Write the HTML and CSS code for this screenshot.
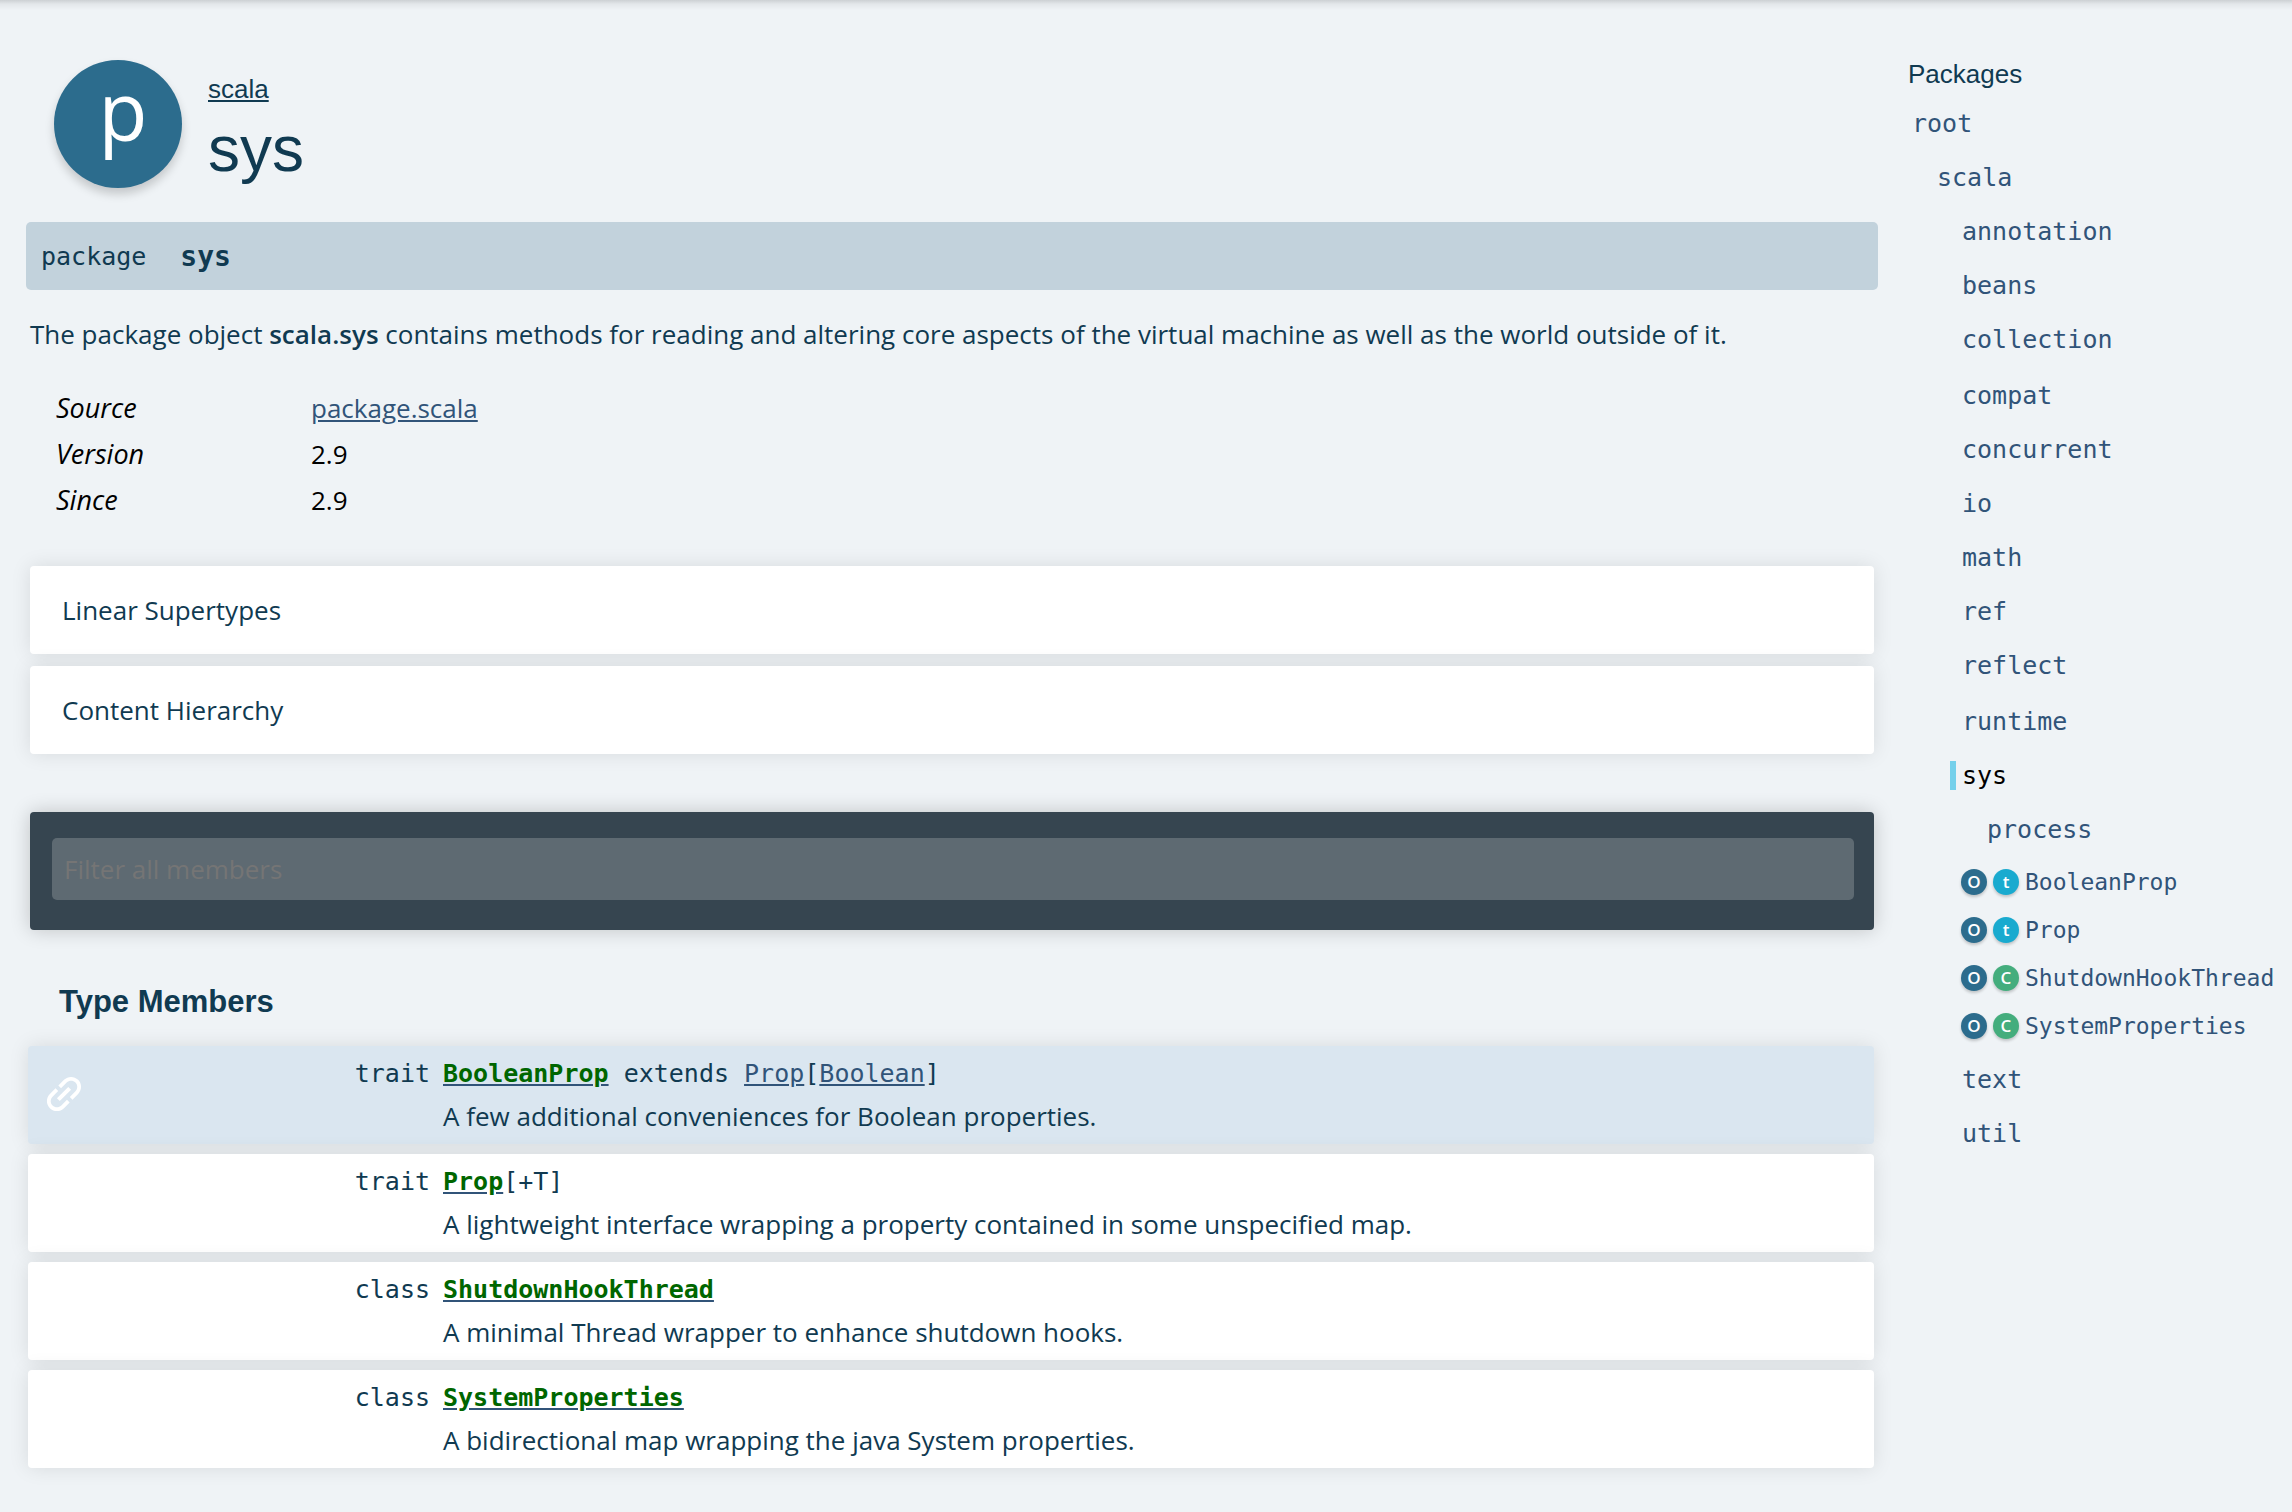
FILE: index.html
```html
<!DOCTYPE html>
<html lang="en">
  <head>
    <meta charset="utf-8">
    <title>scala.sys</title>
    <link rel="stylesheet" href="styles.css">
  </head>
  <body>
    <div id="page">
      <main id="content">
        <header id="definition">
          <div class="big-circle">p</div>
          <div>
            <p id="owner"><a href="#">scala</a></p>
            <h1>sys</h1>
          </div>
        </header>

        <div id="signature">
          <span>package</span>
          <span class="symbol">sys</span>
        </div>

        <div id="comment">
          <p>The package object <b>scala.sys</b> contains methods for reading and altering core aspects of the virtual machine as well as the world outside of it.</p>
          <dl class="attributes">
            <dt>Source</dt>
            <dd><a href="#">package.scala</a></dd>
            <dt>Version</dt>
            <dd>2.9</dd>
            <dt>Since</dt>
            <dd>2.9</dd>
          </dl>
          <button type="button" class="toggle">Linear Supertypes</button>
          <button type="button" class="toggle">Content Hierarchy</button>
        </div>

        <div id="memberfilter">
          <input type="text" id="mbrsel-input" placeholder="Filter all members" aria-label="Filter all members">
        </div>

        <section id="types">
          <h3>Type Members</h3>
          <ol>
            <li class="active">
              <a class="permalink" href="#" aria-label="Permalink">
                <svg viewBox="0 0 24 24" width="48" height="48"><path transform="rotate(-45 12 12)" fill="#fff" d="M3.9 12c0-1.71 1.39-3.1 3.1-3.1h4V7H7c-2.76 0-5 2.24-5 5s2.24 5 5 5h4v-1.9H7c-1.71 0-3.1-1.39-3.1-3.1zM8 13h8v-2H8v2zm9-6h-4v1.9h4c1.71 0 3.1 1.39 3.1 3.1s-1.39 3.1-3.1 3.1h-4V17h4c2.76 0 5-2.24 5-5s-2.24-5-5-5z"/></svg>
              </a>
              <span class="kind">trait</span>
              <div class="member">
                <p class="code"><a class="name" href="#">BooleanProp</a> extends <a href="#">Prop</a>[<a href="#">Boolean</a>]</p>
                <p>A few additional conveniences for Boolean properties.</p>
              </div>
            </li>
            <li>
              <span class="kind">trait</span>
              <div class="member">
                <p class="code"><a class="name" href="#">Prop</a>[+T]</p>
                <p>A lightweight interface wrapping a property contained in some unspecified map.</p>
              </div>
            </li>
            <li>
              <span class="kind">class</span>
              <div class="member">
                <p class="code"><a class="name" href="#">ShutdownHookThread</a></p>
                <p>A minimal Thread wrapper to enhance shutdown hooks.</p>
              </div>
            </li>
            <li>
              <span class="kind">class</span>
              <div class="member">
                <p class="code"><a class="name" href="#">SystemProperties</a></p>
                <p>A bidirectional map wrapping the java System properties.</p>
              </div>
            </li>
          </ol>
        </section>
      </main>

      <nav id="packages">
        <h2>Packages</h2>
        <ul>
          <li><a href="#">root</a>
            <ul>
              <li><a href="#">scala</a>
                <ul>
                  <li><a href="#">annotation</a></li>
                  <li><a href="#">beans</a></li>
                  <li><a href="#">collection</a></li>
                  <li><a href="#">compat</a></li>
                  <li><a href="#">concurrent</a></li>
                  <li><a href="#">io</a></li>
                  <li><a href="#">math</a></li>
                  <li><a href="#">ref</a></li>
                  <li><a href="#">reflect</a></li>
                  <li><a href="#">runtime</a></li>
                  <li><a class="current" href="#">sys</a>
                    <ul>
                      <li><a href="#">process</a></li>
                    </ul>
                    <ul class="entities">
                      <li><span class="dot object">O</span><span class="dot trait">t</span><a href="#">BooleanProp</a></li>
                      <li><span class="dot object">O</span><span class="dot trait">t</span><a href="#">Prop</a></li>
                      <li><span class="dot object">O</span><span class="dot class">C</span><a href="#">ShutdownHookThread</a></li>
                      <li><span class="dot object">O</span><span class="dot class">C</span><a href="#">SystemProperties</a></li>
                    </ul>
                  </li>
                  <li><a href="#">text</a></li>
                  <li><a href="#">util</a></li>
                </ul>
              </li>
            </ul>
          </li>
        </ul>
      </nav>
    </div>
  </body>
</html>
```
FILE: styles.css
```css
* {
  box-sizing: border-box;
  margin: 0;
  padding: 0;
}

body {
  background: #eff3f6 linear-gradient(#cdd1d4, #e3e7ea 4px, #eff3f6 10px) no-repeat;
  color: #103a51;
  font-family: "Open Sans", sans-serif;
  font-size: 26px;
  line-height: 40px;
}

ul, ol {
  list-style: none;
}

a {
  color: #315479;
}

#page {
  display: flex;
  min-height: 100vh;
}

#content {
  flex: 1;
  padding: 60px 30px 44px 26px;
}

#definition {
  display: flex;
  gap: 26px;
  padding-left: 28px;
  height: 162px;
  font-family: "Liberation Sans", Arial, sans-serif;
}

#owner {
  margin-top: 9px;
}

#owner a {
  color: #103a51;
}

#definition h1 {
  font-size: 64px;
  font-weight: normal;
  line-height: 80px;
}

.big-circle {
  width: 128px;
  height: 128px;
  padding-left: 10px;
  border-radius: 50%;
  background: #2c6c8d;
  box-shadow: 0 6px 10px rgba(0, 0, 0, 0.18);
  color: #fff;
  font-family: "Open Sans", sans-serif;
  font-size: 80px;
  line-height: 100px;
  text-align: center;
}

#signature {
  display: flex;
  gap: 34px;
  padding: 2px 15px 0;
  border-radius: 5px;
  background: #c2d2dc;
  font-family: "DejaVu Sans Mono", monospace;
  font-size: 25px;
  line-height: 66px;
}

#signature .symbol {
  font-size: 28px;
  font-weight: bold;
}

#comment {
  padding: 24px 4px 0;
}

#comment b {
  font-weight: 600;
}

.attributes {
  display: grid;
  grid-template-columns: 255px 1fr;
  margin: 31px 0 43px 26px;
  color: #000;
  line-height: 46px;
}

.attributes dt {
  font-size: 27px;
  font-style: italic;
}

.toggle {
  display: block;
  width: 100%;
  height: 88px;
  margin-bottom: 12px;
  padding-left: 32px;
  border: none;
  border-radius: 4px;
  background: #fff;
  box-shadow: 0 0 20px rgba(0, 0, 0, 0.1);
  color: #103a51;
  font: inherit;
  text-align: left;
}

#memberfilter {
  margin: 58px 4px 0;
  padding: 26px 20px 30px 22px;
  border-radius: 4px;
  background: #364550;
  box-shadow: 0 0 20px rgba(0, 0, 0, 0.2);
}

#mbrsel-input {
  display: block;
  width: 100%;
  height: 62px;
  padding: 0 12px;
  border: none;
  border-radius: 5px;
  background: #5e6a72;
  color: #fff;
  font: inherit;
}

#mbrsel-input::placeholder {
  color: #757575;
}

#types {
  padding: 52px 4px 0 2px;
}

#types h3 {
  margin: 0 0 24px 31px;
  font-family: "Liberation Sans", Arial, sans-serif;
  font-size: 31px;
}

#types li {
  position: relative;
  display: flex;
  gap: 13px;
  height: 98px;
  margin-bottom: 10px;
  padding-top: 6px;
  border-radius: 4px;
  background: #fff;
  box-shadow: 0 0 20px rgba(0, 0, 0, 0.1);
}

#types li.active {
  background: #dae6f0;
}

.permalink {
  position: absolute;
  top: 24px;
  left: 12px;
  height: 48px;
}

.kind {
  width: 402px;
  text-align: right;
}

.kind, .code {
  font-family: "DejaVu Sans Mono", monospace;
  font-size: 25px;
  line-height: 44px;
}

.name {
  color: #060;
  font-weight: bold;
  text-decoration-color: #315479;
}

#packages {
  width: 384px;
  padding-top: 52px;
  font-family: "DejaVu Sans Mono", monospace;
  font-size: 25px;
  line-height: 54px;
}

#packages h2 {
  font-family: "Liberation Sans", Arial, sans-serif;
  font-size: 26px;
  font-weight: normal;
  line-height: 45px;
}

#packages a {
  padding-left: 6px;
  border-left: 6px solid transparent;
  text-decoration: none;
}

#packages > ul {
  margin-left: -8px;
}

#packages ul ul {
  padding-left: 25px;
}

#packages ul ul ul > li:nth-child(6n+4) {
  margin-top: 2px;
}

#packages a.current {
  border-color: #74d0eb;
  color: #000;
}

#packages ul.entities {
  padding: 1px 0 3px 11px;
  font-size: 23px;
  line-height: 48px;
}

#packages .entities li {
  display: flex;
  align-items: center;
  gap: 6px;
  margin: 0;
}

#packages ul.entities > li:nth-child(n) {
  margin-top: 0;
}

#packages .entities a {
  padding: 0;
  border: none;
}

.dot {
  width: 26px;
  height: 26px;
  border-radius: 50%;
  box-shadow: 0 2px 3px rgba(0, 0, 0, 0.2);
  color: #fff;
  font-family: "Open Sans", sans-serif;
  font-size: 17px;
  font-weight: 600;
  line-height: 25px;
  text-align: center;
}

.object {
  background: #2c6c8d;
}

.trait {
  background: #19aacf;
}

.class {
  background: #44ad7d;
}
```
